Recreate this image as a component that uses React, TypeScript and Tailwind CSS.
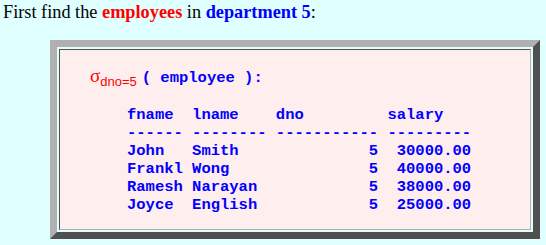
const rows = [
  "fname  lname    dno         salary",
  "------ -------- ----------- ---------",
  "John   Smith              5  30000.00",
  "Frankl Wong               5  40000.00",
  "Ramesh Narayan            5  38000.00",
  "Joyce  English            5  25000.00",
];

export default function App() {
  return (
    <div className="w-[546px] h-[245px] overflow-hidden bg-[#e0ffff] font-['Liberation_Serif',serif] text-black">
      <p className="pl-[3px] pt-[1px] text-[18.3px] leading-[22px]">
        First find the <b className="text-[#ff0000]">employees</b> in{" "}
        <b className="text-[#0000ff]">department 5</b>:
      </p>

      <div className="ml-[50px] mt-[17px] w-[490px] h-[199px] border-[7px] border-solid border-t-[#b0b0b0] border-l-[#b0b0b0] border-r-[#505050] border-b-[#505050] p-[2px]">
        <div className="h-full border border-solid border-t-[#505050] border-l-[#505050] border-r-[#b0b0b0] border-b-[#b0b0b0] bg-[#ffeeee] pl-[30px] pt-[16px]">
          <div className="flex items-baseline leading-[20px]">
            <span className="text-[19px] text-[#ff0000]">σ</span>
            <span className="relative top-[4px] font-['Liberation_Sans',sans-serif] text-[13px] text-[#ff0000]">dno=5</span>
            <span className="ml-[5px] whitespace-pre font-['Liberation_Mono',monospace] text-[15.5px] font-bold text-[#0000ff]">( employee ):</span>
          </div>
          <pre className="ml-[37px] mt-[19px] font-['Liberation_Mono',monospace] text-[15.5px] leading-[17.9px] font-bold text-[#0000ff]">
            {rows.join("\n")}
          </pre>
        </div>
      </div>
    </div>
  );
}
